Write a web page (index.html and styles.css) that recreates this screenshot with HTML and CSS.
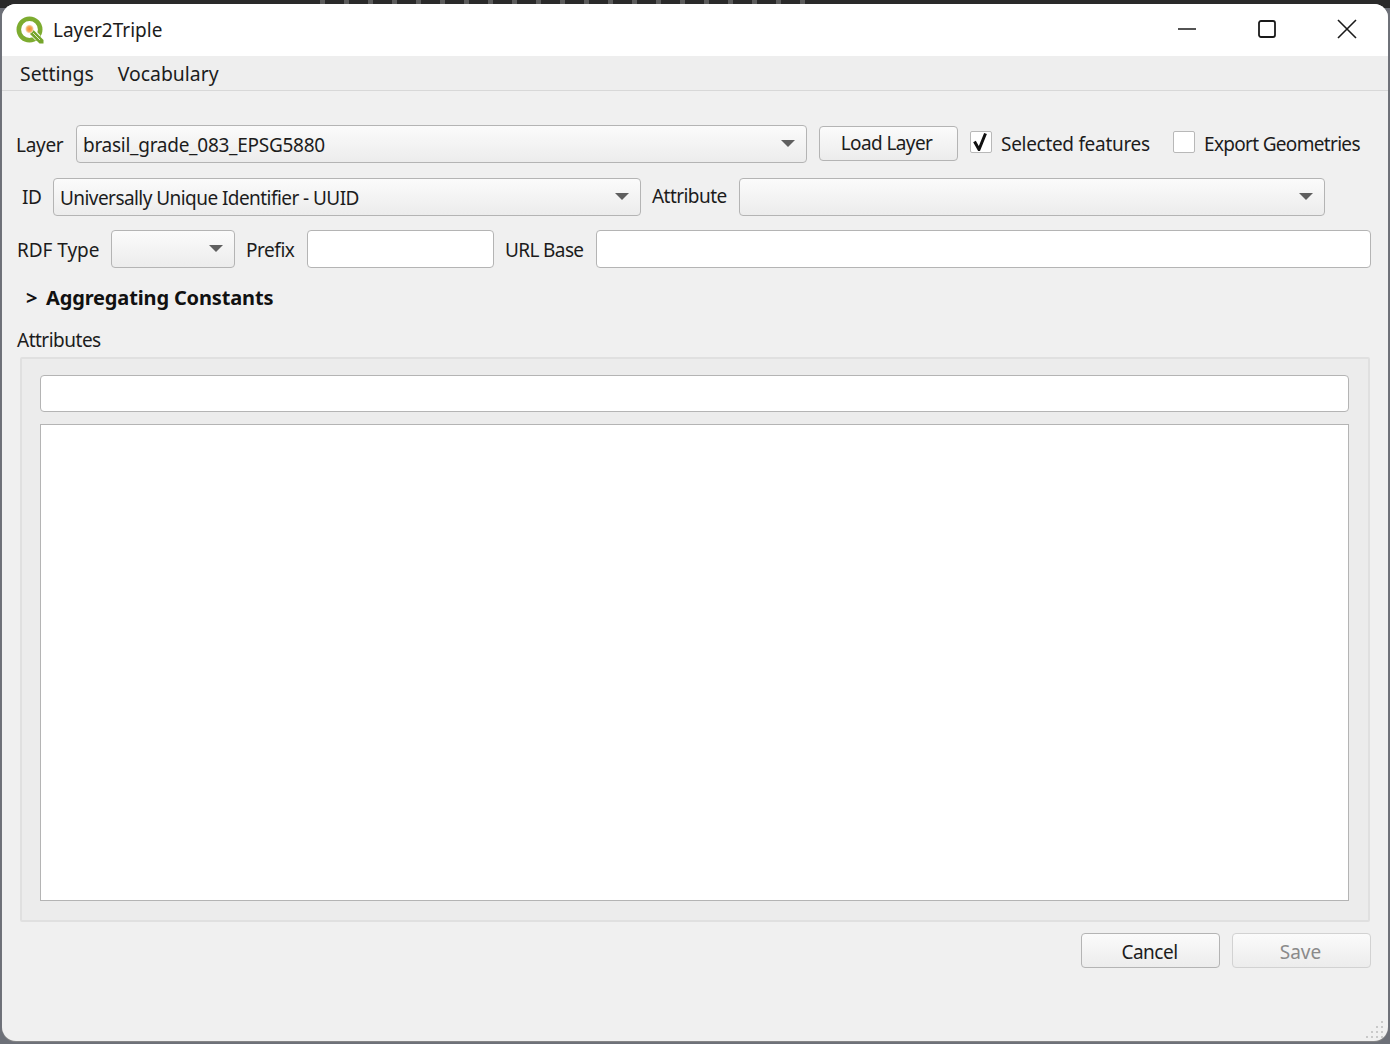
FILE: index.html
```html
<!DOCTYPE html>
<html lang="en">
<head>
<meta charset="utf-8">
<title>Layer2Triple</title>
<link rel="stylesheet" href="styles.css">
</head>
<body>
<div class="window">
  <header class="titlebar">
    <svg class="app-icon" viewBox="0 0 29 28" width="29" height="28">
      <defs>
        <radialGradient id="dot">
          <stop offset="0" stop-color="#f08a2c"/>
          <stop offset="0.6" stop-color="#f3a65a"/>
          <stop offset="1" stop-color="#f7e6c8"/>
        </radialGradient>
      </defs>
      <circle cx="13.5" cy="13.5" r="10.7" fill="none" stroke="#7dac30" stroke-width="4.6"/>
      <path d="M15.5 15.5L22 22" stroke="#fff" stroke-width="7" fill="none"/>
      <path d="M17.5 14L27.5 24V27.5H23.5L14 18Z" fill="#75a52b"/>
      <path d="M17 17L24 24" stroke="#dfe8c8" stroke-width="1" fill="none"/>
      <circle cx="13.5" cy="13" r="4.2" fill="url(#dot)"/>
    </svg>
    <span class="title">Layer2Triple</span>
    <div class="winctl">
      <svg viewBox="0 0 20 20" width="20" height="20"><path d="M1 10H19" stroke="#1a1a1a" stroke-width="1.6"/></svg>
      <svg viewBox="0 0 20 20" width="20" height="20"><rect x="2" y="2" width="16" height="16" rx="2" fill="none" stroke="#1a1a1a" stroke-width="1.8"/></svg>
      <svg viewBox="0 0 20 20" width="20" height="20"><path d="M1 1L19 19M19 1L1 19" stroke="#1a1a1a" stroke-width="1.6"/></svg>
    </div>
  </header>
  <nav class="menubar">
    <span>Settings</span>
    <span>Vocabulary</span>
  </nav>
  <main class="content">
    <div class="row row-layer">
      <label class="lbl lbl-layer">Layer</label>
      <div class="combo combo-layer"><span class="val-layer">brasil_grade_083_EPSG5880</span><i class="arrow"></i></div>
      <button class="btn btn-load">Load Layer</button>
      <span class="check check-selected"><svg viewBox="0 0 19 19" width="19" height="19"><path d="M3.5 9.5L8 17.5L14.5 1.5" fill="none" stroke="#111" stroke-width="3"/></svg></span>
      <label class="lbl lbl-selected">Selected features</label>
      <span class="check"></span>
      <label class="lbl lbl-export">Export Geometries</label>
    </div>
    <div class="row row-id">
      <label class="lbl lbl-id">ID</label>
      <div class="combo combo-id"><span class="val-id">Universally Unique Identifier - UUID</span><i class="arrow"></i></div>
      <label class="lbl lbl-attr">Attribute</label>
      <div class="combo combo-attr"><span></span><i class="arrow"></i></div>
    </div>
    <div class="row row-rdf">
      <label class="lbl lbl-rdf">RDF Type</label>
      <div class="combo combo-rdf"><span></span><i class="arrow"></i></div>
      <label class="lbl lbl-prefix">Prefix</label>
      <div class="field field-prefix"></div>
      <label class="lbl lbl-url">URL Base</label>
      <div class="field field-url"></div>
    </div>
    <div class="aggregating"><span class="caret">&gt;</span>Aggregating Constants</div>
    <div class="lbl attr-title">Attributes</div>
    <section class="group">
      <div class="field field-search"></div>
      <div class="listbox"></div>
    </section>
    <div class="actions">
      <button class="btn btn-action">Cancel</button>
      <button class="btn btn-action disabled">Save</button>
    </div>
  </main>
  <svg class="grip" viewBox="0 0 20 20" width="20" height="20">
    <g fill="#bdbdbd">
      <circle cx="16" cy="3" r="1"/>
      <circle cx="16" cy="8" r="1"/><circle cx="11" cy="8" r="1"/>
      <circle cx="16" cy="13" r="1"/><circle cx="11" cy="13" r="1"/><circle cx="6" cy="13" r="1"/>
      <circle cx="16" cy="18" r="1"/><circle cx="11" cy="18" r="1"/><circle cx="6" cy="18" r="1"/><circle cx="1" cy="18" r="1"/>
    </g>
  </svg>
</div>
</body>
</html>
```
FILE: styles.css
```css
* { box-sizing: border-box; }
html, body { margin: 0; height: 100%; }
body {
  width: 1390px;
  height: 1044px;
  overflow: hidden;
  padding: 4px 2px 3px 2px;
  background:
    repeating-linear-gradient(90deg, #5c5c5c 0 5px, #2a2a2a 5px 24px) 320px 0 / 500px 4px no-repeat,
    linear-gradient(#2a2a2a 0 8px, #6d7078 8px);
  font-family: "Noto Sans", "Open Sans", sans-serif;
  font-size: 19px;
  letter-spacing: -0.5px;
  color: #1c1c1c;
}
.window {
  position: relative;
  height: 1037px;
  background: #f0f0f0;
  border-radius: 14px;
  overflow: hidden;
  display: flex;
  flex-direction: column;
  box-shadow: 0 1px 1px #888;
}
.titlebar {
  height: 52px;
  flex: none;
  background: #fff;
  display: flex;
  align-items: center;
  padding: 0 0 0 14px;
}
.app-icon { flex: none; margin-top: -1px; }
.title { margin-left: 8px; line-height: 1; letter-spacing: 0; }
.winctl {
  margin-left: auto;
  display: flex;
  gap: 60px;
  padding-right: 31px;
  margin-top: -2px;
}
.menubar {
  height: 35px;
  flex: none;
  display: flex;
  align-items: center;
  gap: 24px;
  padding-left: 18px;
  background: #eeeeee;
  border-bottom: 1px solid #d8d8d8;
  font-size: 19.4px;
  letter-spacing: 0;
}
.content {
  display: flex;
  flex-direction: column;
  padding: 34px 18px 0 14px;
}
.row { display: flex; align-items: center; }
.row-layer { height: 38px; }
.row-id { height: 38px; margin-top: 15px; padding-left: 6px; }
.row-rdf { height: 38px; margin-top: 14px; padding-left: 1px; }
.lbl { white-space: nowrap; line-height: 1; flex: none; }
.lbl-layer { width: 60px; margin-top: 2px; letter-spacing: -0.3px; }
.lbl-selected { width: 172px; margin: 0 0 0 9px; letter-spacing: -0.3px; }
.lbl-export { margin: 0 0 0 9px; letter-spacing: -0.68px; }
.lbl-id { width: 31px; }
.lbl-attr { width: 87px; margin: -2px 0 0 11px; letter-spacing: -0.55px; }
.lbl-rdf { width: 94px; margin-top: 2px; letter-spacing: -0.05px; }
.lbl-prefix { width: 61px; margin: 2px 0 0 11px; letter-spacing: -0.45px; }
.lbl-url { width: 91px; margin: 2px 0 0 11px; letter-spacing: -0.62px; }
.combo, .field, .btn {
  border: 1.5px solid #b4b4b4;
  border-radius: 4px;
}
.combo {
  height: 38px;
  flex: none;
  position: relative;
  display: flex;
  align-items: center;
  padding: 2px 0 0 6px;
  background: linear-gradient(#fbfbfb, #ececec);
  white-space: nowrap;
}
.arrow {
  position: absolute;
  right: 11px;
  top: 14px;
  width: 0;
  height: 0;
  border-left: 7px solid transparent;
  border-right: 7px solid transparent;
  border-top: 7px solid #5f5f5f;
}
.combo-layer { width: 731px; }
.val-layer { letter-spacing: -0.27px; }
.val-id { letter-spacing: -0.56px; }
.combo-id { width: 588px; }
.combo-attr { width: 586px; }
.combo-rdf { width: 124px; }
.field { height: 38px; background: #fff; flex: none; }
.field-prefix { width: 187px; }
.field-url { width: 775px; }
.btn {
  font: inherit;
  letter-spacing: inherit;
  color: inherit;
  background: linear-gradient(#fbfbfb, #ececec);
  padding: 0;
}
.btn-load { width: 139px; height: 35px; flex: none; margin: -2px 0 0 12px; padding: 0 4px 0 0; letter-spacing: -0.6px; }
.check {
  width: 22px;
  height: 22px;
  flex: none;
  background: #fff;
  border: 1.5px solid #b8b8b8;
  border-radius: 2px;
  display: flex;
  margin-top: -4px;
}
.check-selected { margin-left: 12px; }
.aggregating {
  margin: 17px 0 0 10px;
  height: 24px;
  line-height: 26px;
  font-size: 20px;
  letter-spacing: -0.15px;
  font-weight: 700;
  color: #111;
  display: flex;
}
.caret { width: 20px; flex: none; }
.attr-title { margin: 21px 0 0 1px; height: 20px; line-height: 20px; }
.group {
  margin: 7px 0 0 4px;
  height: 565px;
  background: #ececec;
  border: 2px solid #e0e0e0;
  border-radius: 2px;
  padding: 16px 19px 19px 18px;
  display: flex;
  flex-direction: column;
  gap: 12px;
}
.field-search { height: 37px; flex: none; }
.listbox { flex: 1; background: #fff; border: 1.5px solid #b4b4b4; }
.actions {
  display: flex;
  justify-content: flex-end;
  gap: 12px;
  margin: 11px -1px 0 0;
}
.btn-action { width: 139px; height: 35px; padding: 2px 2px 0 0; }
.btn.disabled { color: #8a8a8a; border-color: #d2d2d2; letter-spacing: 0; }
.grip { position: absolute; right: 2px; bottom: 2px; }
```
